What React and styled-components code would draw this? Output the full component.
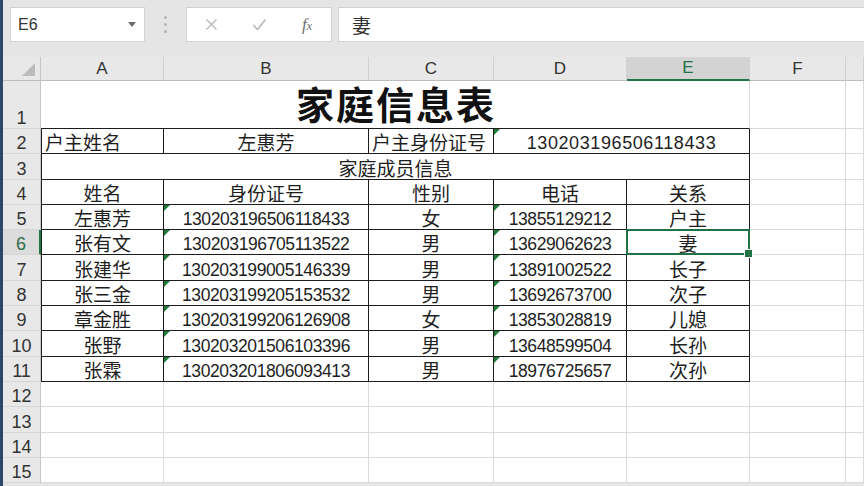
import styled, { createGlobalStyle } from 'styled-components';

const GlobalStyle = createGlobalStyle`
  * { box-sizing: border-box; }
  body {
    margin: 0;
    overflow: hidden;
    background: #fff;
  }
`;

const Window = styled.div`
  width: 864px;
  height: 486px;
  overflow: hidden;
  border-left: 3px solid #2b4866;
  background: #e5e5e5;
`;

const FormulaBar = styled.div`
  display: flex;
  height: 57px;
  padding: 7px 0 15px 7px;
  font-family: "Liberation Sans", Arial, sans-serif;
`;

const NameBox = styled.div`
  width: 135px;
  display: flex;
  align-items: center;
  justify-content: space-between;
  padding: 0 8px 0 7px;
  background: #fff;
  border: 1px solid #d2d2d2;
  font-size: 16px;
  color: #333;
`;

const Caret = styled.span`
  width: 0;
  height: 0;
  border-left: 4px solid transparent;
  border-right: 4px solid transparent;
  border-top: 5px solid #6a6a6a;
`;

const Grip = styled.div`
  width: 41px;
  display: flex;
  flex-direction: column;
  align-items: center;
  justify-content: center;
  gap: 4px;

  > span {
    width: 3px;
    height: 3px;
    border-radius: 50%;
    background: #b4b4b4;
  }
`;

const ButtonBox = styled.div`
  width: 146px;
  display: grid;
  grid-template-columns: repeat(3, 48px);
  align-items: center;
  justify-items: center;
  background: #fff;
  border: 1px solid #d2d2d2;
`;

const Fx = styled.span`
  font-family: "Liberation Serif", "Times New Roman", serif;
  font-style: italic;
  color: #6e6e6e;
  font-size: 17px;

  > small {
    font-size: 12px;
  }
`;

const FormulaInput = styled.div`
  flex: 1;
  margin-left: 6px;
  display: flex;
  align-items: center;
  padding-left: 13px;
  background: #fff;
  border: 1px solid #d2d2d2;
  border-right: none;
  font-family: "Noto Sans CJK SC", sans-serif;
  font-size: 19px;
  color: #333;
`;

const Sheet = styled.div`
  display: grid;
  grid-template-columns: 38px 123px 205px 125px 133px 123px 96px 1fr;
  grid-template-rows: 24px 48px repeat(14, 25.3px);
  background: #fff;
`;

const Corner = styled.div`
  grid-row: 1;
  grid-column: 1;
  display: flex;
  align-items: flex-end;
  justify-content: flex-end;
  padding: 0 5px 4px 0;
  background: #e8e8e8;
  border-right: 1px solid #c6c6c6;
  border-bottom: 1px solid #bdbdbd;

  &::after {
    content: '';
    border-left: 13px solid transparent;
    border-bottom: 13px solid #bcbcbc;
  }
`;

const ColHead = styled.div`
  grid-row: 1;
  grid-column: ${p => p.$col};
  display: flex;
  align-items: center;
  justify-content: center;
  background: ${p => (p.$active ? '#d3d3d3' : '#e8e8e8')};
  border-right: 1px solid #d0d0d0;
  border-bottom: ${p => (p.$active ? '2px solid #217346' : '1px solid #bdbdbd')};
  font-family: "Liberation Sans", Arial, sans-serif;
  font-size: 17px;
  color: ${p => (p.$active ? '#217346' : '#333')};
`;

const RowHead = styled.div`
  grid-row: ${p => p.$row};
  grid-column: 1;
  display: flex;
  align-items: flex-end;
  justify-content: center;
  padding-bottom: 1px;
  line-height: 18px;
  background: ${p => (p.$active ? '#dcdcdc' : '#e8e8e8')};
  border-right: ${p => (p.$active ? '2px solid #217346' : '1px solid #c6c6c6')};
  border-bottom: 1px solid #d6d6d6;
  font-family: "Liberation Sans", Arial, sans-serif;
  font-size: 18px;
  color: ${p => (p.$active ? '#2f6b48' : '#333')};
`;

const GRID = '#dadada';
const INK = '#1c1c1c';

const Cell = styled.div`
  position: relative;
  z-index: ${p => (p.$selected ? 2 : 'auto')};
  grid-row: ${p => p.$row};
  grid-column: ${p => p.$col} / span ${p => p.$span};
  display: flex;
  align-items: flex-end;
  justify-content: ${p => (p.$left ? 'flex-start' : 'center')};
  padding-left: ${p => (p.$left ? '3px' : '0')};
  padding-bottom: ${p => (p.$num ? '0' : '2px')};
  line-height: 19px;
  white-space: nowrap;
  border-right: 1px solid ${p => (p.$table ? INK : GRID)};
  border-bottom: 1px solid ${p => (p.$table ? INK : GRID)};
  border-left: ${p => (p.$first ? `1px solid ${INK}` : 'none')};
  font-family: ${p => (p.$num ? '"Liberation Sans", Arial, sans-serif' : '"Noto Sans CJK SC", sans-serif')};
  font-size: ${p => (p.$num === 'wide' ? '18px' : p.$num ? '17.5px' : '19px')};
  letter-spacing: ${p => (p.$num === 'wide' ? '0.6px' : p.$num ? '-0.4px' : '0')};
  color: #1e1e1e;

  &::before {
    content: '';
    display: ${p => (p.$flag ? 'block' : 'none')};
    position: absolute;
    top: 0;
    left: 0;
    border-top: 6px solid #1f7a36;
    border-right: 6px solid transparent;
  }
`;

const Title = styled.div`
  grid-row: 2;
  grid-column: 2 / span 5;
  display: flex;
  align-items: center;
  justify-content: center;
  padding: 2px 0 0 2px;
  line-height: 40px;
  border-right: 1px solid ${GRID};
  border-bottom: 1px solid ${INK};
  font-family: "Liberation Sans", "Noto Sans CJK SC", sans-serif;
  font-size: 38px;
  font-weight: 700;
  letter-spacing: 2px;
  color: #111;
`;

const Selection = styled.div`
  position: absolute;
  top: -1px;
  left: -1px;
  right: -1px;
  bottom: -1px;
  border: 2px solid #217346;

  &::after {
    content: '';
    position: absolute;
    right: -5px;
    bottom: -5px;
    width: 7px;
    height: 7px;
    background: #217346;
    border: 1px solid #fff;
  }
`;

const COLS = ['A', 'B', 'C', 'D', 'E', 'F', ''];

const members = [
  ['左惠芳', '130203196506118433', '女', '13855129212', '户主'],
  ['张有文', '130203196705113522', '男', '13629062623', '妻'],
  ['张建华', '130203199005146339', '男', '13891002522', '长子'],
  ['张三金', '130203199205153532', '男', '13692673700', '次子'],
  ['章金胜', '130203199206126908', '女', '13853028819', '儿媳'],
  ['张野', '130203201506103396', '男', '13648599504', '长孙'],
  ['张霖', '130203201806093413', '男', '18976725657', '次孙'],
];

function buildCells() {
  const cells = [
    { row: 2, col: 2, text: '户主姓名', left: true, table: true, first: true },
    { row: 2, col: 3, text: '左惠芳', table: true },
    { row: 2, col: 4, text: '户主身份证号', left: true, table: true },
    { row: 2, col: 5, span: 2, text: '130203196506118433', num: 'wide', flag: true, table: true },
    { row: 3, col: 2, span: 5, text: '家庭成员信息', table: true, first: true },
  ];
  ['姓名', '身份证号', '性别', '电话', '关系'].forEach((text, i) =>
    cells.push({ row: 4, col: 2 + i, text, table: true, first: i === 0 })
  );
  members.forEach((m, r) =>
    m.forEach((text, i) => {
      const isNum = i === 1 || i === 3;
      cells.push({
        row: 5 + r,
        col: 2 + i,
        text,
        table: true,
        first: i === 0,
        num: isNum ? 'id' : undefined,
        flag: isNum,
        selected: r === 1 && i === 4,
      });
    })
  );
  for (let row = 1; row <= 15; row++) {
    for (let col = 2; col <= 8; col++) {
      if (row <= 11 && col <= 6) continue;
      cells.push({ row, col });
    }
  }
  return cells;
}

const cells = buildCells();

function CancelIcon() {
  return (
    <svg width="13" height="13" viewBox="0 0 13 13">
      <path d="M1.5 1.5l10 10M11.5 1.5l-10 10" stroke="#b8b8b8" strokeWidth="1.4" fill="none" />
    </svg>
  );
}

function EnterIcon() {
  return (
    <svg width="15" height="13" viewBox="0 0 15 13">
      <path d="M1.5 7l4 4.5L13.5 1.5" stroke="#b8b8b8" strokeWidth="1.6" fill="none" />
    </svg>
  );
}

export default function App() {
  return (
    <Window>
      <GlobalStyle />
      <FormulaBar>
        <NameBox>
          E6
          <Caret />
        </NameBox>
        <Grip>
          <span />
          <span />
          <span />
        </Grip>
        <ButtonBox>
          <CancelIcon />
          <EnterIcon />
          <Fx>
            f<small>x</small>
          </Fx>
        </ButtonBox>
        <FormulaInput>妻</FormulaInput>
      </FormulaBar>

      <Sheet>
        <Corner />
        {COLS.map((c, i) => (
          <ColHead key={i} $col={i + 2} $active={c === 'E'}>
            {c}
          </ColHead>
        ))}
        {Array.from({ length: 15 }, (_, i) => (
          <RowHead key={i} $row={i + 2} $active={i + 1 === 6}>
            {i + 1}
          </RowHead>
        ))}

        <Title>家庭信息表</Title>

        {cells.map(c => (
          <Cell
            key={`${c.row}-${c.col}`}
            $row={c.row + 1}
            $col={c.col}
            $span={c.span || 1}
            $left={c.left}
            $table={c.table}
            $first={c.first}
            $num={c.num}
            $flag={c.flag}
            $selected={c.selected}
          >
            {c.text}
            {c.selected && <Selection />}
          </Cell>
        ))}
      </Sheet>
    </Window>
  );
}
